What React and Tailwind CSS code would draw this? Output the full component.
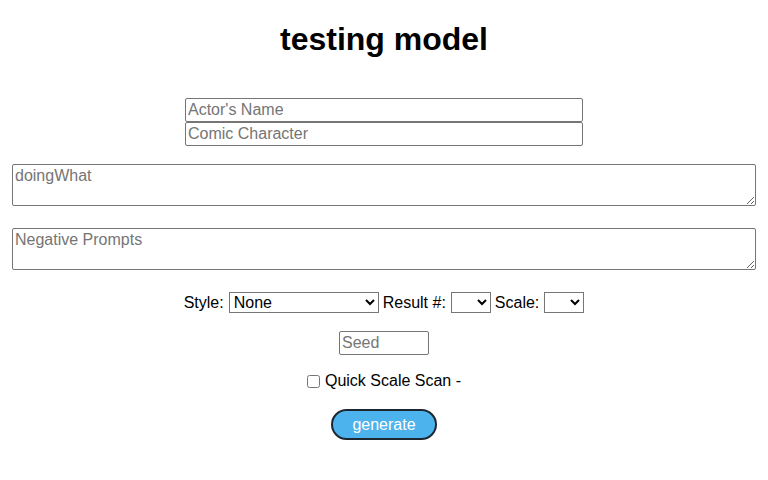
export default function App() {
  return (
    <div className="min-h-[480px] bg-white text-black font-['Liberation_Sans',Arial,sans-serif] text-[16px] leading-[18px] flex flex-col items-center">
      <h1 className="mt-[21px] text-[32px] leading-[37px] font-bold">testing model</h1>

      <div className="mt-[40px] flex flex-col">
        <input
          type="text"
          placeholder="Actor's Name"
          className="w-[398px] h-[24px] border border-[#767676] rounded-[2px] px-[2px] placeholder-[#757575] outline-none"
        />
        <input
          type="text"
          placeholder="Comic Character"
          className="w-[398px] h-[24px] border border-[#767676] rounded-[2px] px-[2px] placeholder-[#757575] outline-none"
        />
      </div>

      <textarea
        placeholder="doingWhat"
        className="mt-[18px] w-[744px] h-[42px] border border-[#767676] rounded-[2px] px-[2px] py-[2px] placeholder-[#757575] outline-none"
      />
      <textarea
        placeholder="Negative Prompts"
        className="mt-[22px] w-[744px] h-[42px] border border-[#767676] rounded-[2px] px-[2px] py-[2px] placeholder-[#757575] outline-none"
      />

      <div className="mt-[22px] flex items-center gap-[4px]">
        <span className="mr-[1px]">Style:</span>
        <select className="w-[150px] h-[21px] border border-[#767676] bg-white">
          <option>None</option>
        </select>
        <span className="mr-[1px]">Result #:</span>
        <select className="w-[40px] h-[21px] border border-[#767676] bg-white">
          <option></option>
        </select>
        <span className="mr-[1px]">Scale:</span>
        <select className="w-[40px] h-[21px] border border-[#767676] bg-white">
          <option></option>
        </select>
      </div>

      <input
        type="text"
        placeholder="Seed"
        className="mt-[18px] w-[90px] h-[24px] border border-[#767676] rounded-[2px] px-[2px] placeholder-[#757575] outline-none"
      />

      <label className="mt-[17px] flex items-center gap-[5px]">
        <input type="checkbox" className="w-[13px] h-[13px]" />
        <span>Quick Scale Scan -</span>
      </label>

      <button className="mt-[19px] w-[106px] h-[31px] rounded-full border-2 border-[#1d2731] bg-[#4db3ec] text-white">
        generate
      </button>
    </div>
  )
}
